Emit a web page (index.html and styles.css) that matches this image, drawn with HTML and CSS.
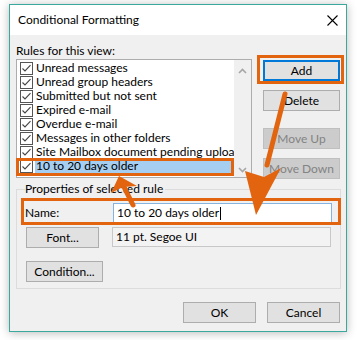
FILE: index.html
```html
<!DOCTYPE html>
<html>
<head>
<meta charset="utf-8">
<link rel="stylesheet" href="styles.css">
</head>
<body>
<div class="window">
  <div class="titlebar">
    <span class="title">Conditional Formatting</span>
    <svg class="close" width="11" height="11" viewBox="0 0 11 11"><path d="M0.5 0.5 L10.5 10.5 M10.5 0.5 L0.5 10.5" stroke="#000" stroke-width="1.1" fill="none"/></svg>
  </div>
  <div class="content">
    <div class="top">
      <div class="rules">
        <div class="label">Rules for this view:</div>
        <div class="listbox">
          <ul class="items">
            <li><svg class="cb" viewBox="0 0 13 13"><rect x="0.5" y="0.5" width="12" height="12" fill="#fff" stroke="#555"/><path d="M2.5 6.5 L5 9 L10.5 3.2" fill="none" stroke="#444" stroke-width="1.1"/></svg><span class="txt">Unread messages</span></li>
            <li><svg class="cb" viewBox="0 0 13 13"><rect x="0.5" y="0.5" width="12" height="12" fill="#fff" stroke="#555"/><path d="M2.5 6.5 L5 9 L10.5 3.2" fill="none" stroke="#444" stroke-width="1.1"/></svg><span class="txt">Unread group headers</span></li>
            <li><svg class="cb" viewBox="0 0 13 13"><rect x="0.5" y="0.5" width="12" height="12" fill="#fff" stroke="#555"/><path d="M2.5 6.5 L5 9 L10.5 3.2" fill="none" stroke="#444" stroke-width="1.1"/></svg><span class="txt">Submitted but not sent</span></li>
            <li><svg class="cb" viewBox="0 0 13 13"><rect x="0.5" y="0.5" width="12" height="12" fill="#fff" stroke="#555"/><path d="M2.5 6.5 L5 9 L10.5 3.2" fill="none" stroke="#444" stroke-width="1.1"/></svg><span class="txt">Expired e-mail</span></li>
            <li><svg class="cb" viewBox="0 0 13 13"><rect x="0.5" y="0.5" width="12" height="12" fill="#fff" stroke="#555"/><path d="M2.5 6.5 L5 9 L10.5 3.2" fill="none" stroke="#444" stroke-width="1.1"/></svg><span class="txt">Overdue e-mail</span></li>
            <li><svg class="cb" viewBox="0 0 13 13"><rect x="0.5" y="0.5" width="12" height="12" fill="#fff" stroke="#555"/><path d="M2.5 6.5 L5 9 L10.5 3.2" fill="none" stroke="#444" stroke-width="1.1"/></svg><span class="txt">Messages in other folders</span></li>
            <li><svg class="cb" viewBox="0 0 13 13"><rect x="0.5" y="0.5" width="12" height="12" fill="#fff" stroke="#555"/><path d="M2.5 6.5 L5 9 L10.5 3.2" fill="none" stroke="#444" stroke-width="1.1"/></svg><span class="txt">Site Mailbox document pending upload</span></li>
            <li class="sel"><svg class="cb" viewBox="0 0 13 13"><rect x="0.5" y="0.5" width="12" height="12" fill="#fff" stroke="#555"/><path d="M2.5 6.5 L5 9 L10.5 3.2" fill="none" stroke="#444" stroke-width="1.1"/></svg><span class="txt">10 to 20 days older</span></li>
          </ul>
          <div class="scrollbar">
            <svg width="9" height="6" viewBox="0 0 9 6"><path d="M1 5 L4.5 1.5 L8 5" fill="none" stroke="#a6a6a6" stroke-width="1.6"/></svg>
            <svg width="9" height="6" viewBox="0 0 9 6"><path d="M1 1 L4.5 4.5 L8 1" fill="none" stroke="#a6a6a6" stroke-width="1.6"/></svg>
          </div>
        </div>
      </div>
      <div class="side">
        <button class="btn default">Add</button>
        <button class="btn b-delete">Delete</button>
        <button class="btn disabled b-up">Move Up</button>
        <button class="btn disabled b-down">Move Down</button>
      </div>
    </div>
    <fieldset class="props">
      <legend>Properties of selected rule</legend>
      <div class="name-row">
        <span class="name-label">Name:</span>
        <div class="input">10 to 20 days older<span class="caret"></span></div>
      </div>
      <div class="font-row">
        <button class="btn b-font">Font...</button>
        <div class="display">11 pt. Segoe UI</div>
      </div>
      <button class="btn b-cond">Condition...</button>
    </fieldset>
    <div class="footer">
      <button class="btn b-foot">OK</button>
      <button class="btn b-foot">Cancel</button>
    </div>
  </div>
</div>
<svg class="annot" width="357" height="340" viewBox="0 0 357 340">
  <g fill="none" stroke="#e2640f" stroke-width="3">
    <rect x="258.5" y="56.5" width="84" height="26"/>
    <rect x="17.5" y="159.5" width="215" height="15"/>
    <rect x="22.5" y="199.5" width="317" height="24"/>
  </g>
  <g stroke="#e2640f" stroke-width="5" stroke-linecap="round" fill="#e2640f">
    <line x1="285" y1="94" x2="267" y2="165"/>
    <line x1="133" y1="205" x2="124" y2="187"/>
  </g>
  <g fill="#e2640f">
    <polygon points="256,215 245,171 264,177 281,168"/>
    <polygon points="119,176 111,193 123,187 137,186"/>
  </g>
</svg>
</body>
</html>
```

FILE: styles.css
```css
html, body {
  margin: 0;
  padding: 0;
}
body {
  width: 357px;
  height: 340px;
  overflow: hidden;
  position: relative;
  background: #ffffff;
  font-family: Lato, "Noto Sans", sans-serif;
  font-size: 12px;
  color: #000;
}
.window {
  margin: 4px 0 0 9px;
  width: 338px;
  height: 328px;
  box-sizing: border-box;
  border: 1px solid #3aa99b;
  background: #f0f0f0;
  box-shadow: 0 1px 9px rgba(0, 0, 0, 0.28);
  display: flex;
  flex-direction: column;
}
.titlebar {
  height: 30px;
  flex: none;
  background: #fff;
  display: flex;
  align-items: center;
  justify-content: space-between;
  padding: 0 8px 0 8px;
}
.title {
  line-height: 16px;
}
.close {
  display: block;
  margin-top: 1px;
}
.content {
  flex: 1;
  padding: 8px 5px 0 6px;
  display: flex;
  flex-direction: column;
}
.top {
  display: flex;
  gap: 11px;
}
.rules {
  width: 236px;
  flex: none;
}
.label {
  height: 16px;
  line-height: 16px;
}
.listbox {
  height: 119px;
  box-sizing: border-box;
  border: 1px solid #adadad;
  background: #fff;
  display: flex;
}
.items {
  flex: 1;
  min-width: 0;
  list-style: none;
  margin: 0;
  padding: 1px 0 0 3px;
  overflow: hidden;
}
.items li {
  display: flex;
  align-items: center;
  height: 14px;
  white-space: nowrap;
}
.cb {
  width: 13px;
  height: 13px;
  flex: none;
  margin-right: 2px;
}
.txt {
  line-height: 14px;
  padding-left: 1px;
}
.items li.sel .txt {
  flex: 1;
  background: #a6cef0;
}
.scrollbar {
  width: 17px;
  flex: none;
  background: #f0f0f0;
  display: flex;
  flex-direction: column;
  align-items: center;
  justify-content: space-between;
  padding: 8px 0 4px;
  box-sizing: border-box;
}
.scrollbar svg {
  display: block;
}
.side {
  width: 77px;
  flex: none;
  display: flex;
  flex-direction: column;
  padding-top: 17px;
}
.btn {
  height: 21px;
  box-sizing: border-box;
  border: 1px solid #adadad;
  background: #e1e1e1;
  font: inherit;
  color: #000;
  padding: 0;
  margin: 0;
  line-height: 16px;
  text-align: center;
}
.btn.default {
  border: 2px solid #0078d7;
}
.btn.disabled {
  background: #cccccc;
  border-color: #bfbfbf;
  color: #838383;
}
.b-delete {
  margin-top: 9px;
}
.b-up {
  margin-top: 17px;
}
.b-down {
  margin-top: 9px;
}
.props {
  margin: 2px 0 0 0;
  width: 325px;
  box-sizing: border-box;
  padding: 0 0 6px 8px;
  border: 1px solid #dcdcdc;
  min-width: 0;
}
.props legend {
  padding: 0 2px 0 0;
  line-height: 16px;
}
.name-row {
  display: flex;
  align-items: center;
  margin-top: 6px;
}
.name-label {
  width: 88px;
  line-height: 16px;
}
.input {
  width: 219px;
  height: 20px;
  box-sizing: border-box;
  border: 1px solid #86b3df;
  background: #fff;
  padding: 0 3px;
  line-height: 18px;
  display: flex;
  align-items: center;
  white-space: nowrap;
}
.caret {
  display: inline-block;
  width: 1px;
  height: 13px;
  background: #000;
  margin-left: 1px;
}
.font-row {
  display: flex;
  align-items: flex-start;
  margin-top: 4px;
}
.b-font {
  width: 73px;
  margin-left: 1px;
}
.display {
  margin-left: 13px;
  width: 219px;
  height: 20px;
  box-sizing: border-box;
  border: 1px solid #c8c8c8;
  background: #f3f3f3;
  padding: 0 3px;
  line-height: 18px;
}
.b-cond {
  display: block;
  width: 77px;
  margin: 13px 0 0 1px;
}
.footer {
  display: flex;
  justify-content: flex-end;
  gap: 11px;
  margin-top: 13px;
  padding-right: 1px;
}
.b-foot {
  width: 73px;
}
.annot {
  position: absolute;
  left: 0;
  top: 0;
  pointer-events: none;
}
```
